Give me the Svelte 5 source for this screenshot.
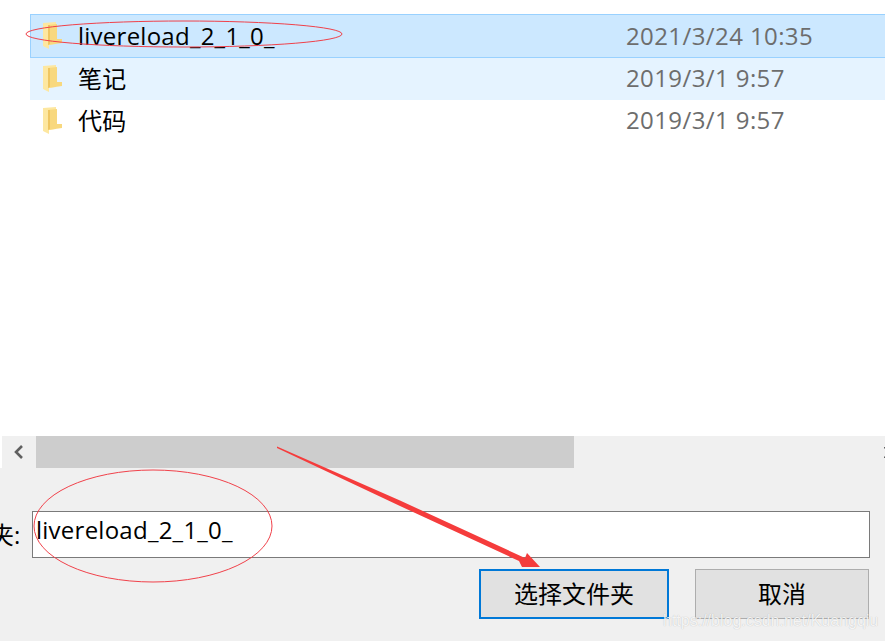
<script>
    const rows = [
        { name: "livereload_2_1_0_", date: "2021/3/24 10:35", state: "selected" },
        { name: "笔记", date: "2019/3/1 9:57", state: "hover" },
        { name: "代码", date: "2019/3/1 9:57", state: "" },
    ];
</script>

<div class="dialog">
    <div class="list">
        {#each rows as row}
            <div class="row {row.state}">
                <svg class="folder" width="20" height="28" viewBox="0 0 20 28">
                    <path d="M0 1 L13 0 V22 L6 23 L6 27 L0 24 Z" fill="#fde7a0" />
                    <path d="M5 3 L14 2 L14 17 L19 17 V21 L5 23 Z" fill="#f8d87e" />
                    <path d="M5 3 L7 3 V22 L5 23 Z" fill="#efc661" />
                </svg>
                <span class="name">{row.name}</span>
                <span class="date">{row.date}</span>
            </div>
        {/each}
    </div>

    <div class="scrollbar">
        <div class="arrow">
            <svg width="12" height="16" viewBox="0 0 12 16">
                <path d="M9 2 L3 8 L9 14" fill="none" stroke="#606060" stroke-width="2.6" />
            </svg>
        </div>
        <div class="thumb"></div>
        <div class="track">
            <!-- the right arrow is cut off by the edge of the screenshot -->
            <svg width="1" height="32" viewBox="0 0 1 32">
                <rect y="11" width="1" height="1.5" fill="#606060" />
                <rect y="20.5" width="1" height="1.5" fill="#606060" />
            </svg>
        </div>
    </div>

    <div class="footer">
        <div class="field">
            <span class="label">夹:</span>
            <div class="input">livereload_2_1_0_</div>
        </div>
        <div class="buttons">
            <div class="btn primary">选择文件夹</div>
            <div class="btn">取消</div>
        </div>
    </div>

    <svg class="marks" width="885" height="641" viewBox="0 0 885 641">
        <ellipse cx="184" cy="34" rx="158" ry="13" fill="none" stroke="#f0414a" stroke-width="1" />
        <ellipse cx="153" cy="526" rx="119" ry="56" fill="none" stroke="#f0414a" stroke-width="1" />
        <path d="M277 446.5 L400 500.5 L525 558 L527 553 L540 567 L522 567 L519 561 L400 506 L277 448 Z" fill="#f53c3c" />
    </svg>
    <span class="watermark">https://blog.csdn.net/Kuangqiu</span>
</div>

<style>
    :global(body) {
        margin: 0;
        background: #fff;
    }

    .dialog {
        position: relative;
        width: 885px;
        height: 641px;
        overflow: hidden;
        font-family: "Open Sans", "Noto Sans CJK SC", sans-serif;
        color: #000;
    }

    .list {
        height: 436px;
        padding: 14px 0 0 30px;
        box-sizing: border-box;
    }

    .row {
        display: flex;
        align-items: center;
        height: 42px;
        padding-left: 13px;
        font-size: 24px;
    }

    .row.selected {
        height: 44px;
        background: #cce8ff;
        border: 1px solid #99d1ff;
        border-right: none;
        padding-left: 12px;
        box-sizing: border-box;
    }

    .row.hover {
        background: #e5f3ff;
    }

    .folder {
        flex: none;
    }

    .name {
        margin: -3px 0 0 15px;
        width: 548px;
        flex: none;
        letter-spacing: 0.25px;
    }

    .date {
        margin-top: -3px;
        color: #6d6d6d;
        letter-spacing: 0.4px;
    }

    .row.selected .name,
    .row.selected .date {
        margin-top: -1px;
    }

    .scrollbar {
        display: flex;
        height: 32px;
        padding-left: 2px;
    }

    .arrow {
        width: 34px;
        background: #f0f0f0;
        display: flex;
        align-items: center;
        padding-left: 11px;
        box-sizing: border-box;
    }

    .thumb {
        width: 538px;
        background: #cdcdcd;
    }

    .track {
        flex: 1;
        background: #f0f0f0;
        display: flex;
        justify-content: flex-end;
    }

    .footer {
        height: 173px;
        background: #f0f0f0;
        padding-top: 43px;
        box-sizing: border-box;
    }

    .field {
        display: flex;
        align-items: center;
        margin-left: -10px;
        width: 880px;
        font-size: 24px;
    }

    .label {
        width: 42px;
        flex: none;
        margin-top: -2px;
        white-space: nowrap;
    }

    .input {
        flex: 1;
        height: 47px;
        line-height: 35px;
        box-sizing: border-box;
        background: #fff;
        border: 1px solid #7a7a7a;
        padding-left: 3px;
        letter-spacing: 0.25px;
    }

    .buttons {
        display: flex;
        gap: 26px;
        margin: 11px 0 0 479px;
    }

    .btn {
        width: 174px;
        height: 50px;
        line-height: 48px;
        box-sizing: border-box;
        background: #e1e1e1;
        border: 1px solid #adadad;
        text-align: center;
        font-size: 24px;
    }

    .btn.primary {
        width: 190px;
        line-height: 46px;
        border: 2px solid #0078d7;
    }

    .marks {
        position: absolute;
        inset: 0;
        pointer-events: none;
    }

    .watermark {
        position: absolute;
        left: 663px;
        top: 612px;
        font-family: "Liberation Sans", sans-serif;
        font-size: 16px;
        color: rgba(255, 255, 255, 0.85);
        text-shadow: 0 0 1px rgba(0, 0, 0, 0.25);
        white-space: nowrap;
    }
</style>
